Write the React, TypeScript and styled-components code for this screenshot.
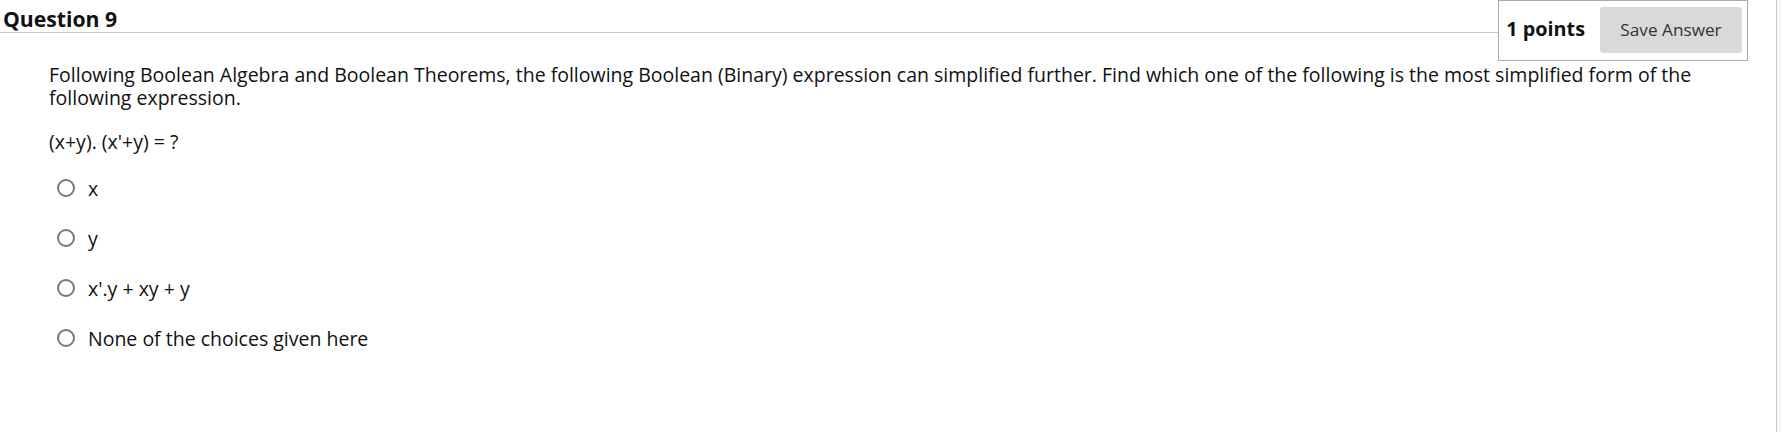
import React from 'react';
import styled, { createGlobalStyle } from 'styled-components';

const GlobalStyle = createGlobalStyle`
  html, body {
    margin: 0;
    padding: 0;
    background: #ffffff;
  }
  body {
    font-family: "Open Sans", "Noto Sans", sans-serif;
    color: #111111;
  }
`;

const choices = ['x', 'y', "x'.y + xy + y", 'None of the choices given here'];

function App() {
  return (
    <>
      <GlobalStyle />
      <Page>
        <Main>
          <Header>
            <Title>Question 9</Title>
            <PointsBox>
              <Points>1 points</Points>
              <SaveButton type="button">Save Answer</SaveButton>
            </PointsBox>
          </Header>
          <Body>
            <Prompt>
              Following Boolean Algebra and Boolean Theorems, the following Boolean (Binary) expression can
              simplified further. Find which one of the following is the most simplified form of the following
              expression.
            </Prompt>
            <Expression>(x+y). (x'+y) = ?</Expression>
            <Choices>
              {choices.map((c) => (
                <Choice key={c}>
                  <Radio />
                  <ChoiceText>{c}</ChoiceText>
                </Choice>
              ))}
            </Choices>
          </Body>
        </Main>
        <Rail />
      </Page>
    </>
  );
}

const Page = styled.div`
  display: flex;
  height: 432px;
  overflow: hidden;
`;

const Main = styled.div`
  flex: 1;
  min-width: 0;
`;

const Rail = styled.div`
  width: 5px;
  border-left: 1px solid #c8c8c8;
  background: #f9f9f9;
`;

const Header = styled.div`
  display: flex;
  align-items: flex-start;
  padding-right: 28px;
`;

const Title = styled.h2`
  flex: 1;
  box-sizing: border-box;
  margin: 0;
  height: 33px;
  padding: 5px 0 0 3px;
  border-bottom: 1px solid #c8c8c8;
  font-size: 21.2px;
  font-weight: 700;
  line-height: 28px;
  color: #111;
`;

const PointsBox = styled.div`
  display: flex;
  align-items: center;
  gap: 15px;
  height: 59px;
  padding: 0 5px 0 7px;
  border: 1px solid #ababab;
`;

const Points = styled.span`
  margin-bottom: 5px;
  font-size: 19.8px;
  font-weight: 700;
  color: #111;
`;

const SaveButton = styled.button`
  width: 142px;
  height: 46px;
  margin-bottom: 1px;
  padding: 0 0 2px;
  border: none;
  border-radius: 3px;
  background: #d9d9d9;
  color: #333;
  font-family: "Open Sans", "Noto Sans", sans-serif;
  font-size: 17.2px;
`;

const Body = styled.div`
  padding: 2px 40px 0 49px;
`;

const Prompt = styled.p`
  margin: 0;
  font-size: 19.5px;
  line-height: 23px;
`;

const Expression = styled.p`
  margin: 21px 0 0;
  font-size: 19.5px;
  line-height: 23px;
`;

const Choices = styled.div`
  margin-top: 10px;
  display: flex;
  flex-direction: column;
`;

const Choice = styled.label`
  display: flex;
  align-items: center;
  height: 50px;
  padding-left: 8px;
`;

const Radio = styled.span`
  box-sizing: border-box;
  width: 18px;
  height: 18px;
  border: 2px solid #787878;
  border-radius: 50%;
  flex-shrink: 0;
`;

const ChoiceText = styled.span`
  margin-left: 13px;
  font-size: 19.5px;
  line-height: 23px;
`;

export default App;
